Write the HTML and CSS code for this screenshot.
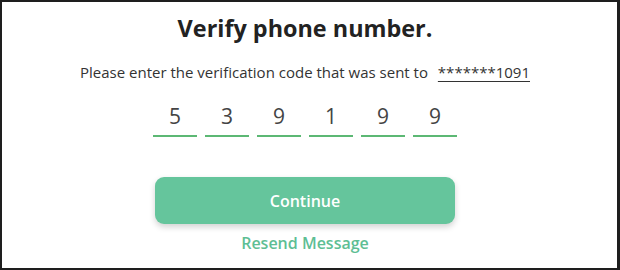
FILE: index.html
```html
<!DOCTYPE html>
<html>
<head>
<meta charset="utf-8">
<link rel="stylesheet" href="styles.css">
</head>
<body>
<div class="frame">
  <h1 class="title">Verify phone number.</h1>
  <p class="subtitle">Please enter the verification code that was sent to <span class="phone">*******1091</span></p>
  <div class="code">
    <div class="digit">5</div>
    <div class="digit">3</div>
    <div class="digit">9</div>
    <div class="digit">1</div>
    <div class="digit">9</div>
    <div class="digit">9</div>
  </div>
  <button class="continue">Continue</button>
  <a class="resend">Resend Message</a>
</div>
</body>
</html>
```
FILE: styles.css
```css
html, body {
  margin: 0;
  padding: 0;
  background: #fff;
}
.frame {
  box-sizing: border-box;
  width: 620px;
  height: 270px;
  border: 2px solid #1e1e1e;
  border-right-width: 3px;
  padding-right: 9px;
  display: flex;
  flex-direction: column;
  align-items: center;
  font-family: "Open Sans", "Noto Sans", sans-serif;
}
.title {
  margin: 10px 0 0 0;
  font-size: 23.4px;
  font-weight: 700;
  color: #222;
  line-height: 32px;
}
.subtitle {
  margin: 18px 0 0 0;
  font-size: 15px;
  color: #333;
  line-height: 20px;
}
.phone {
  margin-left: 6px;
  text-decoration: underline;
  text-underline-offset: 3px;
}
.code {
  display: flex;
  gap: 8px;
  margin-top: 20px;
}
.digit {
  width: 44px;
  height: 33px;
  border-bottom: 2px solid #5cb874;
  text-align: center;
  font-size: 21px;
  line-height: 28px;
  color: #444;
}
.continue {
  margin-top: 40px;
  width: 300px;
  height: 47px;
  border: none;
  border-radius: 9px;
  background: #65c59c;
  color: #fff;
  font-family: inherit;
  font-size: 16px;
  font-weight: 600;
  box-shadow: 0 3px 6px rgba(0, 0, 0, 0.18);
}
.resend {
  margin-top: 8px;
  font-size: 16px;
  font-weight: 600;
  color: #5ebe94;
  line-height: 22px;
}
```
